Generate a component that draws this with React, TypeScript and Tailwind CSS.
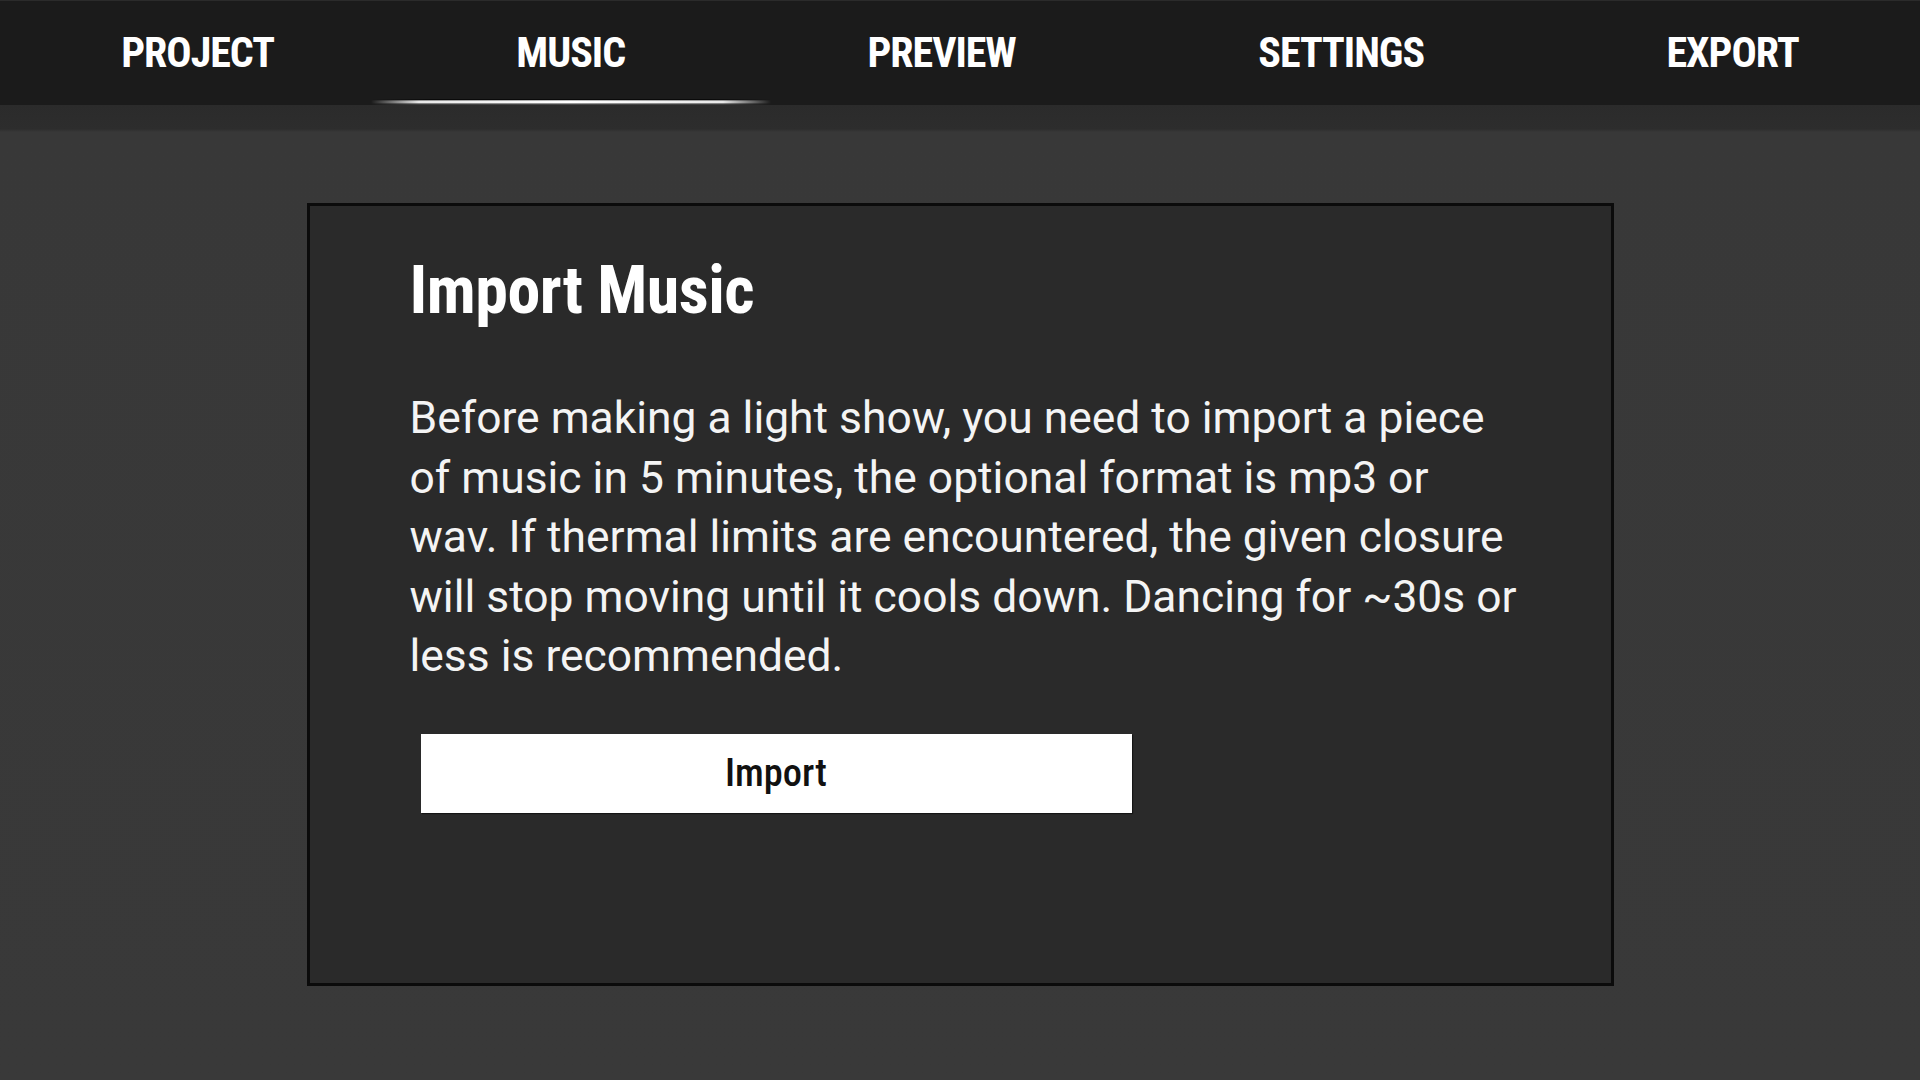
import React from "react";

const tabs = ["PROJECT", "MUSIC", "PREVIEW", "SETTINGS", "EXPORT"];

const lines = [
  "Before making a light show, you need to import a piece",
  "of music in 5 minutes, the optional format is mp3 or",
  "wav. If thermal limits are encountered, the given closure",
  "will stop moving until it cools down. Dancing for ~30s or",
  "less is recommended.",
];

export default function App() {
  return (
    <div className="w-full h-[1080px] bg-[#393939] flex flex-col font-['Roboto_Condensed',Roboto,sans-serif] overflow-hidden">
      <nav className="h-[105px] shrink-0 bg-[#1b1b1b] border-t border-[#2b2b2b] flex justify-around items-stretch">
        {tabs.map((t) => (
          <div key={t} className="relative flex items-center">
            <span className="text-[42px] leading-none font-bold text-white tracking-[-1px]">{t}</span>
            {t === "MUSIC" && (
              <div className="absolute left-1/2 -translate-x-1/2 bottom-0 w-[400px] h-[6px] flex flex-col">
                <div className="h-[1px] bg-[linear-gradient(to_right,transparent,#0a0a0a_15%,#0a0a0a_85%,transparent)]" />
                <div className="h-[1px] bg-[linear-gradient(to_right,transparent,rgba(255,255,255,0.55)_12%,rgba(255,255,255,0.7)_50%,rgba(255,255,255,0.55)_88%,transparent)]" />
                <div className="h-[2px] bg-[linear-gradient(to_right,transparent,#e8e8e8_12%,#ffffff_50%,#e8e8e8_88%,transparent)]" />
                <div className="h-[1px] bg-[linear-gradient(to_right,transparent,rgba(255,255,255,0.45)_12%,rgba(255,255,255,0.55)_50%,rgba(255,255,255,0.45)_88%,transparent)]" />
                <div className="h-[1px] bg-[linear-gradient(to_right,transparent,rgba(255,255,255,0.15)_12%,rgba(255,255,255,0.2)_50%,rgba(255,255,255,0.15)_88%,transparent)]" />
              </div>
            )}
          </div>
        ))}
      </nav>
      <main className="flex-1 bg-[linear-gradient(to_bottom,#2b2b2b_0px,#2d2d2d_24px,#383838_27px,#393939_100%)] pt-[98px]">
        <section className="mx-auto w-[1307px] h-[783px] border-[3px] border-[#0b0b0b] bg-[#2a2a2a] pt-[52px] pl-[100px] pr-[80px]">
          <h1 className="text-[66px] leading-none font-bold text-white tracking-[-0.5px]">Import Music</h1>
          <p className="mt-[65px] font-['Roboto',sans-serif] text-[44.4px] leading-[59.5px] font-normal text-[#f4f4f4]">
            {lines.map((l, i) => (
              <span key={i} className="block whitespace-nowrap">
                {l}
              </span>
            ))}
          </p>
          <button className="mt-[47px] ml-[11px] w-[711px] h-[79px] bg-white shadow-[1px_1px_1px_rgba(0,0,0,0.5)] flex items-center justify-center text-[38.5px] font-medium text-[#111111] leading-none">
            Import
          </button>
        </section>
      </main>
    </div>
  );
}
